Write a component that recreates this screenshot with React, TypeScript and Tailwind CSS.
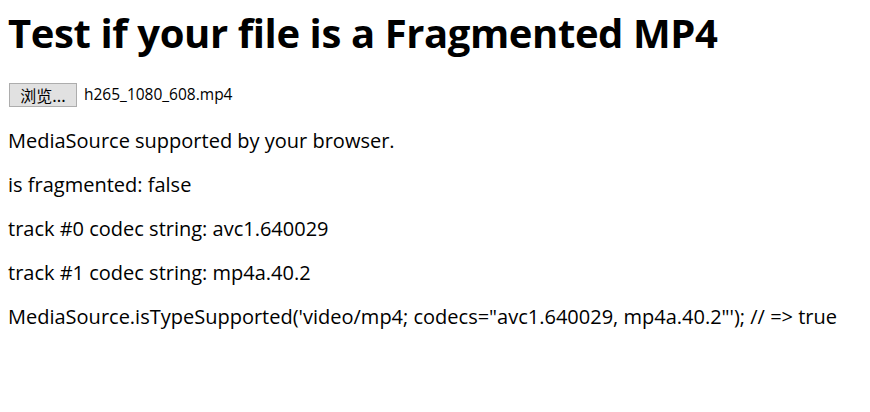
export default function App() {
  const lines = [
    "MediaSource supported by your browser.",
    "is fragmented: false",
    "track #0 codec string: avc1.640029",
    "track #1 codec string: mp4a.40.2",
    "MediaSource.isTypeSupported('video/mp4; codecs=\"avc1.640029, mp4a.40.2\"'); // => true",
  ];

  return (
    <div className="min-h-[412px] bg-white px-2 text-black font-['Open_Sans','Noto_Sans_CJK_SC',sans-serif]">
      <h1 className="pt-[7px] text-[40px] font-bold leading-[52px] tracking-[-0.4px] whitespace-nowrap">
        Test if your file is a Fragmented MP4
      </h1>
      <div className="mt-[24px] flex items-center gap-[7px]">
        <button className="ml-px h-6 w-[68px] border border-[#adadad] bg-[#e1e1e1] text-[16px] leading-none font-['Noto_Sans_CJK_SC',sans-serif]">
          浏览...
        </button>
        <span className="text-[15.5px]">h265_1080_608.mp4</span>
      </div>
      <div className="mt-[22px] flex flex-col gap-[20px]">
        {lines.map((line, i) => (
          <p key={i} className="text-[20px] leading-6 whitespace-nowrap">
            {line}
          </p>
        ))}
      </div>
    </div>
  );
}
